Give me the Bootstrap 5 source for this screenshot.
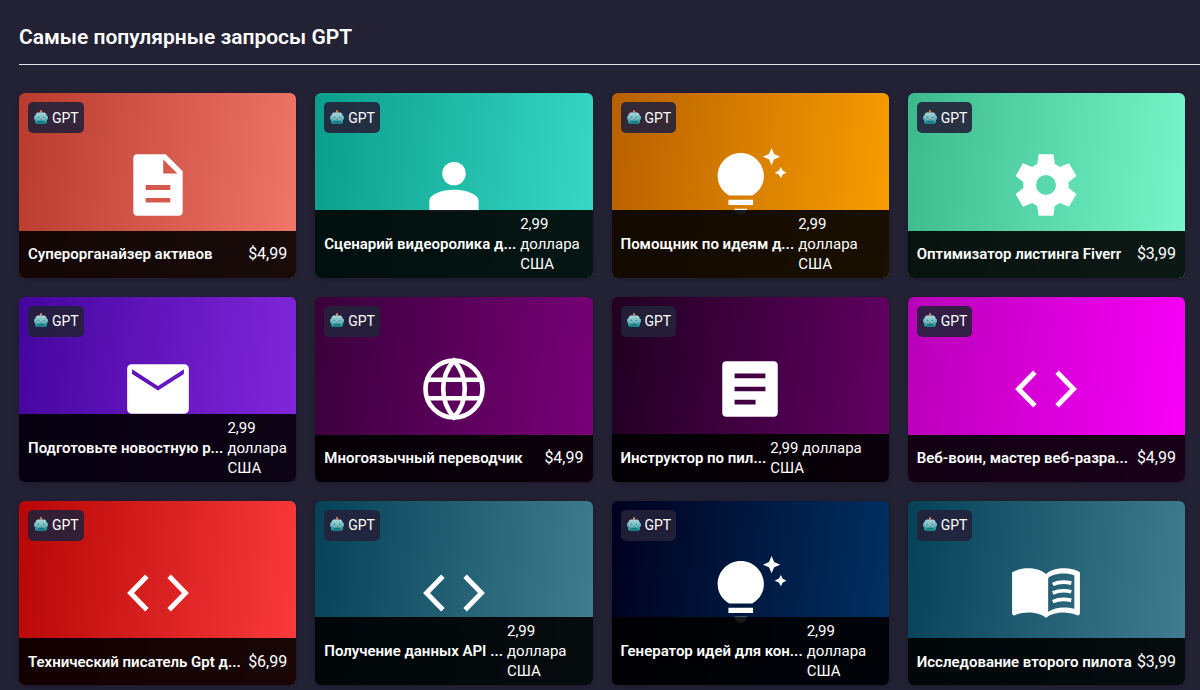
<!DOCTYPE html>
<html lang="ru">
<head>
<meta charset="utf-8">
<meta name="viewport" content="width=device-width, initial-scale=1">
<title>Самые популярные запросы GPT</title>
<link href="https://cdn.jsdelivr.net/npm/bootstrap@5.3.0/dist/css/bootstrap.min.css" rel="stylesheet">
<style>
  body { background: #232134; color: #fff; font-family: Roboto, "Noto Sans", sans-serif; font-size: 15px; line-height: 20px; }
  .page { padding: 21px 0 4px 19px; }
  .page-title { font-size: 21px; line-height: 32px; font-weight: 600; margin: 0; }
  .rule { margin: 11px 0 28px; border-top: 1px solid #e4e3ea; opacity: 1; }
  .prompts { display: grid; grid-template-columns: repeat(4, minmax(0, 1fr)); gap: 19px; padding-right: 15px; }
  .prompt { aspect-ratio: 3 / 2; border-radius: 6px; color: #fff; box-shadow: 0 1px 4px rgba(0, 0, 0, .25); background: linear-gradient(97deg, var(--from), var(--to)); }
  .prompt:hover { color: #fff; }
  .glyph { width: 74px; height: 74px; fill: #fff; }
  .tag { top: 9px; left: 9px; height: 31px; padding: 0 5px 0 6px; gap: 4px; border-radius: 5px; background: rgba(35, 33, 58, .9); font-size: 14px; }
  .tag svg { width: 14px; height: 16px; }
  .caption { min-height: 47px; padding: 4px 9px; gap: 4px; background: rgba(0, 0, 0, .9); }
  .name { font-weight: 600; }
  .sum { font-size: 16px; }
  .c-coral { --from: #b83b2d; --to: #f1776b; }
  .c-teal { --from: #0a9e8b; --to: #38d9c6; }
  .c-amber { --from: #b86000; --to: #f99f00; }
  .c-mint { --from: #3cba8d; --to: #77f7cb; }
  .c-violet { --from: #44059e; --to: #8327dd; }
  .c-plum { --from: #3a003a; --to: #7a007a; }
  .c-grape { --from: #200020; --to: #640064; }
  .c-magenta { --from: #b800b8; --to: #fa00fa; }
  .c-red { --from: #b80606; --to: #fa3b3b; }
  .c-steel { --from: #054257; --to: #427e92; }
  .c-navy { --from: #00001e; --to: #003264; }
</style>
</head>
<body>
<svg class="position-absolute" width="0" height="0" aria-hidden="true" xmlns="http://www.w3.org/2000/svg">
  <defs>
    <linearGradient id="shell" x1="0" y1="0" x2="0" y2="1"><stop offset="0" stop-color="#b4d6da"/><stop offset=".5" stop-color="#5fb9bb"/><stop offset="1" stop-color="#137f86"/></linearGradient>
  </defs>
  <symbol id="robot" viewBox="0 0 14 16">
    <path d="M6.500 1.500h1v2h-1z" fill="#c9a37c"/><circle cx="7" cy="1.200" r="1.100" fill="#e2804a"/>
    <path d="M0 6h14v3.500H0z" fill="#6fa9b4"/>
    <path d="M3.500 2.500h7Q13 3.500 13 7v4.500Q13 14 10.500 14h-7Q1 14 1 11.500V7Q1 3.500 3.500 2.500z" fill="url(#shell)"/>
    <circle cx="4.500" cy="7.500" r="1.900" fill="#b9dde1"/><circle cx="9.500" cy="7.500" r="1.900" fill="#b9dde1"/>
    <circle cx="4.500" cy="7.500" r="1.200" fill="#3a8f9c"/><circle cx="9.500" cy="7.500" r="1.200" fill="#3a8f9c"/>
    <path d="M6.400 9h1.200v1H6.400z" fill="#c06a5a"/><path d="M4 11.300h6v1.200H4z" fill="#0f6c74"/>
  </symbol>
  <symbol id="document" viewBox="0 0 24 24"><path fill-rule="evenodd" d="M5.200 2h9.300L20 7.500v13.200c0 .8-.5 1.300-1.300 1.300H5.200C4.500 22 4 21.500 4 20.700V3.300C4 2.500 4.500 2 5.200 2zM13.700 3.700v4.600h4.600zM8 12v1.600h8V12zM8 16.200v1.500h8v-1.500z"/></symbol>
  <symbol id="person" viewBox="0 0 24 24"><circle cx="12" cy="8.300" r="3.800"/><path d="M4 20.500v-3.300c0-2.200 4-3.700 8-3.700s8 1.500 8 3.700v3.300z"/></symbol>
  <symbol id="idea" viewBox="0 0 24 24"><path d="M7 19.700h4c0 1.100-.9 2-2 2s-2-.9-2-2zM5 16.800h8v1.700H5zM16.500 9.100c0 3.820-2.660 5.660-3.770 6.300H5.270C4.160 14.760 1.500 12.920 1.500 9.100 1.500 4.960 4.860 1.600 9 1.600s7.500 3.360 7.500 7.500zM21.200 7.370L20 8l1.370.63L22 9.800l.63-1.170L23.800 8l-1.170-.63L22 6.200l-.63 1.170zM19 5.600l.84-1.960L21.800 2.800l-1.960-.84L19 0l-.84 1.960-1.960.84 1.960.84z"/></symbol>
  <symbol id="gear" viewBox="0 0 24 24">
    <circle cx="12" cy="12" r="5.300" fill="none" stroke="#fff" stroke-width="4.100"/>
    <path id="tooth" d="M9.600 2h4.800l.6 4.300H9z"/>
    <use href="#tooth" transform="rotate(60 12 12)"/><use href="#tooth" transform="rotate(120 12 12)"/><use href="#tooth" transform="rotate(180 12 12)"/><use href="#tooth" transform="rotate(240 12 12)"/><use href="#tooth" transform="rotate(300 12 12)"/>
  </symbol>
  <symbol id="mail" viewBox="0 0 24 24"><path fill-rule="evenodd" d="M3.400 4h17.200c.8 0 1.400.6 1.400 1.400v13.200c0 .8-.6 1.400-1.400 1.400H3.400c-.8 0-1.400-.6-1.400-1.400V5.400C2 4.600 2.600 4 3.400 4zM3.600 5.600v1.500l8.400 5.400 8.400-5.400V5.600L12 11z"/></symbol>
  <symbol id="globe" viewBox="0 0 24 24"><g fill="none" stroke="#fff" stroke-width="1.500"><circle cx="12" cy="12" r="9.250"/><path d="M3 9h18M3 15h18M12 2.800C9.600 5.500 8.500 8.800 8.500 12s1.100 6.500 3.500 9.200c2.400-2.700 3.500-6 3.500-9.200S14.400 5.500 12 2.800z"/></g></symbol>
  <symbol id="article" viewBox="0 0 24 24"><path fill-rule="evenodd" d="M4.300 3h15.400c.8 0 1.300.5 1.300 1.300v15.400c0 .8-.5 1.300-1.300 1.300H4.300c-.8 0-1.300-.5-1.300-1.300V4.300C3 3.500 3.500 3 4.300 3zM7 7v1.500h10V7zM7 11.250v1.500h10v-1.500zM7 15.500V17h6.800v-1.500z"/></symbol>
  <symbol id="code" viewBox="0 0 24 24"><path fill="none" stroke="#fff" stroke-width="1.600" d="M8.400 6.600L3.100 12l5.300 5.400M15.600 6.600l5.300 5.400-5.300 5.400"/></symbol>
  <symbol id="book" viewBox="0 0 24 24"><path fill-rule="evenodd" d="M1 5.300C2.400 4.400 4.400 4 6.300 4s4.100.5 5.700 1.800C13.600 4.500 15.800 4 17.700 4s4 .4 5.300 1.300v13.300c0 .5-.5.8-.9.6-1.400-.6-2.900-.9-4.400-.9-2 0-4.200.5-5.700 1.700-1.500-1.200-3.700-1.700-5.700-1.700-1.500 0-3 .3-4.400.9-.4.2-.9-.1-.9-.6zM21.200 6.300c-1-.4-2.200-.6-3.400-.6-2 0-4 .5-5.100 1.400v11c1.400-.9 3.300-1.400 5.100-1.400 1.200 0 2.300.1 3.400.4z"/><path fill="none" stroke="#fff" stroke-width="1.200" d="M14.200 9.200c1.800-.8 4-.9 6-.4M14.200 12c1.800-.8 4-.9 6-.4M14.200 14.800c1.800-.8 4-.9 6-.4"/></symbol>
</svg>

<main class="page">
  <h1 class="page-title">Самые популярные запросы GPT</h1>
  <hr class="rule">
  <section class="prompts">
    <a href="#" class="prompt c-coral position-relative overflow-hidden d-flex align-items-center justify-content-center text-decoration-none">
      <svg class="glyph" aria-hidden="true"><use href="#document"/></svg>
      <span class="tag position-absolute d-flex align-items-center"><svg aria-hidden="true"><use href="#robot"/></svg>GPT</span>
      <span class="caption position-absolute bottom-0 start-0 w-100 d-flex align-items-center justify-content-between"><span class="name text-nowrap">Суперорганайзер активов</span><span class="sum">$4,99</span></span>
    </a>
    <a href="#" class="prompt c-teal position-relative overflow-hidden d-flex align-items-center justify-content-center text-decoration-none">
      <svg class="glyph" aria-hidden="true"><use href="#person"/></svg>
      <span class="tag position-absolute d-flex align-items-center"><svg aria-hidden="true"><use href="#robot"/></svg>GPT</span>
      <span class="caption position-absolute bottom-0 start-0 w-100 d-flex align-items-center justify-content-between"><span class="name text-nowrap">Сценарий видеоролика д...</span><span>2,99 доллара США</span></span>
    </a>
    <a href="#" class="prompt c-amber position-relative overflow-hidden d-flex align-items-center justify-content-center text-decoration-none">
      <svg class="glyph" aria-hidden="true"><use href="#idea"/></svg>
      <span class="tag position-absolute d-flex align-items-center"><svg aria-hidden="true"><use href="#robot"/></svg>GPT</span>
      <span class="caption position-absolute bottom-0 start-0 w-100 d-flex align-items-center justify-content-between"><span class="name text-nowrap">Помощник по идеям д...</span><span>2,99 доллара США</span></span>
    </a>
    <a href="#" class="prompt c-mint position-relative overflow-hidden d-flex align-items-center justify-content-center text-decoration-none">
      <svg class="glyph" aria-hidden="true"><use href="#gear"/></svg>
      <span class="tag position-absolute d-flex align-items-center"><svg aria-hidden="true"><use href="#robot"/></svg>GPT</span>
      <span class="caption position-absolute bottom-0 start-0 w-100 d-flex align-items-center justify-content-between"><span class="name text-nowrap">Оптимизатор листинга Fiverr</span><span class="sum">$3,99</span></span>
    </a>
    <a href="#" class="prompt c-violet position-relative overflow-hidden d-flex align-items-center justify-content-center text-decoration-none">
      <svg class="glyph" aria-hidden="true"><use href="#mail"/></svg>
      <span class="tag position-absolute d-flex align-items-center"><svg aria-hidden="true"><use href="#robot"/></svg>GPT</span>
      <span class="caption position-absolute bottom-0 start-0 w-100 d-flex align-items-center justify-content-between"><span class="name text-nowrap">Подготовьте новостную р...</span><span>2,99 доллара США</span></span>
    </a>
    <a href="#" class="prompt c-plum position-relative overflow-hidden d-flex align-items-center justify-content-center text-decoration-none">
      <svg class="glyph" aria-hidden="true"><use href="#globe"/></svg>
      <span class="tag position-absolute d-flex align-items-center"><svg aria-hidden="true"><use href="#robot"/></svg>GPT</span>
      <span class="caption position-absolute bottom-0 start-0 w-100 d-flex align-items-center justify-content-between"><span class="name text-nowrap">Многоязычный переводчик</span><span class="sum">$4,99</span></span>
    </a>
    <a href="#" class="prompt c-grape position-relative overflow-hidden d-flex align-items-center justify-content-center text-decoration-none">
      <svg class="glyph" aria-hidden="true"><use href="#article"/></svg>
      <span class="tag position-absolute d-flex align-items-center"><svg aria-hidden="true"><use href="#robot"/></svg>GPT</span>
      <span class="caption position-absolute bottom-0 start-0 w-100 d-flex align-items-center justify-content-between"><span class="name text-nowrap">Инструктор по пил...</span><span>2,99 доллара США</span></span>
    </a>
    <a href="#" class="prompt c-magenta position-relative overflow-hidden d-flex align-items-center justify-content-center text-decoration-none">
      <svg class="glyph" aria-hidden="true"><use href="#code"/></svg>
      <span class="tag position-absolute d-flex align-items-center"><svg aria-hidden="true"><use href="#robot"/></svg>GPT</span>
      <span class="caption position-absolute bottom-0 start-0 w-100 d-flex align-items-center justify-content-between"><span class="name text-nowrap">Веб-воин, мастер веб-разра...</span><span class="sum">$4,99</span></span>
    </a>
    <a href="#" class="prompt c-red position-relative overflow-hidden d-flex align-items-center justify-content-center text-decoration-none">
      <svg class="glyph" aria-hidden="true"><use href="#code"/></svg>
      <span class="tag position-absolute d-flex align-items-center"><svg aria-hidden="true"><use href="#robot"/></svg>GPT</span>
      <span class="caption position-absolute bottom-0 start-0 w-100 d-flex align-items-center justify-content-between"><span class="name text-nowrap">Технический писатель Gpt д...</span><span class="sum">$6,99</span></span>
    </a>
    <a href="#" class="prompt c-steel position-relative overflow-hidden d-flex align-items-center justify-content-center text-decoration-none">
      <svg class="glyph" aria-hidden="true"><use href="#code"/></svg>
      <span class="tag position-absolute d-flex align-items-center"><svg aria-hidden="true"><use href="#robot"/></svg>GPT</span>
      <span class="caption position-absolute bottom-0 start-0 w-100 d-flex align-items-center justify-content-between"><span class="name text-nowrap">Получение данных API ...</span><span>2,99 доллара США</span></span>
    </a>
    <a href="#" class="prompt c-navy position-relative overflow-hidden d-flex align-items-center justify-content-center text-decoration-none">
      <svg class="glyph" aria-hidden="true"><use href="#idea"/></svg>
      <span class="tag position-absolute d-flex align-items-center"><svg aria-hidden="true"><use href="#robot"/></svg>GPT</span>
      <span class="caption position-absolute bottom-0 start-0 w-100 d-flex align-items-center justify-content-between"><span class="name text-nowrap">Генератор идей для кон...</span><span>2,99 доллара США</span></span>
    </a>
    <a href="#" class="prompt c-steel position-relative overflow-hidden d-flex align-items-center justify-content-center text-decoration-none">
      <svg class="glyph" aria-hidden="true"><use href="#book"/></svg>
      <span class="tag position-absolute d-flex align-items-center"><svg aria-hidden="true"><use href="#robot"/></svg>GPT</span>
      <span class="caption position-absolute bottom-0 start-0 w-100 d-flex align-items-center justify-content-between"><span class="name text-nowrap">Исследование второго пилота</span><span class="sum">$3,99</span></span>
    </a>
  </section>
</main>
<script src="https://cdn.jsdelivr.net/npm/bootstrap@5.3.0/dist/js/bootstrap.bundle.min.js"></script>
</body>
</html>
